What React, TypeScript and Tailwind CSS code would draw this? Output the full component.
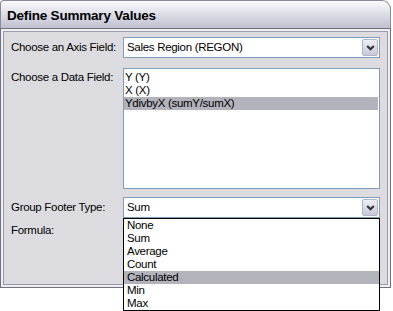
import React from "react";

function Chevron() {
  return (
    <svg width="9" height="6" viewBox="0 0 9 6">
      <polyline points="1.2,1 4.5,4.3 7.8,1" fill="none" stroke="#30303c" strokeWidth="2" />
    </svg>
  );
}

function Combo({ value }: { value: string }) {
  return (
    <div className="h-[21px] w-[257px] shrink-0 border border-[#7f9db9] bg-white flex items-center">
      <div className="flex-1 pl-[3px] leading-[13px] whitespace-nowrap">{value}</div>
      <div className="h-[17px] w-[16px] mr-[1px] border border-[#b0b4c6] rounded-[2px] bg-gradient-to-b from-[#f0f0f6] to-[#c6c8d6] flex items-center justify-center">
        <Chevron />
      </div>
    </div>
  );
}

export default function App() {
  const dataItems = ["Y (Y)", "X (X)", "YdivbyX (sumY/sumX)"];
  const footerItems = ["None", "Sum", "Average", "Count", "Calculated", "Min", "Max"];
  return (
    <div className="w-[393px] h-[311px] bg-white overflow-hidden relative font-['Liberation_Sans',Arial,sans-serif] text-[11.5px] tracking-[-0.3px] text-black">
      <div className="w-[391px] h-[288px] flex flex-col">
        <div className="h-[28px] shrink-0 rounded-tl-[4px] rounded-tr-[9px] border border-b-0 border-[#8a8a98] bg-gradient-to-b from-[#fafafc] to-[#c0c0d2] flex items-center pl-[6px] pt-[3px]">
          <span className="font-bold text-[13.5px] tracking-[-0.2px] whitespace-nowrap">Define Summary Values</span>
        </div>
        <div className="flex-1 border border-[#70707e] bg-[#eeeef2] p-[2px]">
          <div className="h-full border border-[#9c9caa] bg-[#dcdce0] pl-[7px] pt-[5px] flex flex-col">
            <div className="flex items-center">
              <div className="w-[112px] shrink-0 whitespace-nowrap">Choose an Axis Field:</div>
              <Combo value="Sales Region (REGON)" />
            </div>
            <div className="flex mt-[10px]">
              <div className="w-[112px] shrink-0 whitespace-nowrap pt-[1px]">Choose a Data Field:</div>
              <div className="h-[121px] w-[257px] shrink-0 border border-[#7f9db9] bg-white pt-[2px]">
                {dataItems.map((t, i) => (
                  <div
                    key={t}
                    className={
                      "h-[13px] leading-[13px] pl-[1px] mr-[1px] whitespace-nowrap " +
                      (i === 2 ? "bg-[#b3b3bc]" : "")
                    }
                  >
                    {t}
                  </div>
                ))}
              </div>
            </div>
            <div className="flex items-center mt-[8px]">
              <div className="w-[112px] shrink-0 whitespace-nowrap">Group Footer Type:</div>
              <Combo value="Sum" />
            </div>
            <div className="mt-[4px] whitespace-nowrap">Formula:</div>
          </div>
        </div>
      </div>
      <div className="absolute left-[123px] top-[218px] w-[257px] h-[93px] border border-black bg-white">
        {footerItems.map((t) => (
          <div
            key={t}
            className={
              "h-[13px] leading-[13px] pl-[3px] whitespace-nowrap " +
              (t === "Calculated" ? "bg-[#b3b3bc]" : "")
            }
          >
            {t}
          </div>
        ))}
      </div>
    </div>
  );
}
